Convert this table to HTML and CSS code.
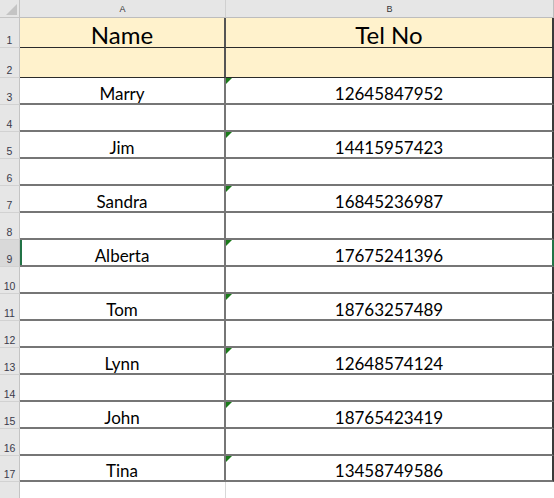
FILE: index.html
```html
<!DOCTYPE html>
<html>
<head>
<meta charset="utf-8">
<link rel="stylesheet" href="styles.css">
</head>
<body>
<div class="sheet">
  <div class="corner"><span class="corner-tri"></span></div>
  <div class="colhead">A</div>
  <div class="colhead colhead-b">B</div>

  <div class="rowhead">1</div>
  <div class="cell title a">Name</div>
  <div class="cell title b">Tel No</div>

  <div class="rowhead">2</div>
  <div class="cell title a"></div>
  <div class="cell title b"></div>

  <div class="rowhead">3</div>
  <div class="cell a">Marry</div>
  <div class="cell b tri">12645847952</div>

  <div class="rowhead">4</div>
  <div class="cell a"></div>
  <div class="cell b"></div>

  <div class="rowhead">5</div>
  <div class="cell a">Jim</div>
  <div class="cell b tri">14415957423</div>

  <div class="rowhead">6</div>
  <div class="cell a"></div>
  <div class="cell b"></div>

  <div class="rowhead">7</div>
  <div class="cell a">Sandra</div>
  <div class="cell b tri">16845236987</div>

  <div class="rowhead">8</div>
  <div class="cell a"></div>
  <div class="cell b"></div>

  <div class="rowhead sel-row">9</div>
  <div class="cell a sel-a">Alberta</div>
  <div class="cell b tri sel-b">17675241396</div>

  <div class="rowhead">10</div>
  <div class="cell a"></div>
  <div class="cell b"></div>

  <div class="rowhead">11</div>
  <div class="cell a">Tom</div>
  <div class="cell b tri">18763257489</div>

  <div class="rowhead">12</div>
  <div class="cell a"></div>
  <div class="cell b"></div>

  <div class="rowhead">13</div>
  <div class="cell a">Lynn</div>
  <div class="cell b tri">12648574124</div>

  <div class="rowhead">14</div>
  <div class="cell a"></div>
  <div class="cell b"></div>

  <div class="rowhead">15</div>
  <div class="cell a">John</div>
  <div class="cell b tri">18765423419</div>

  <div class="rowhead">16</div>
  <div class="cell a"></div>
  <div class="cell b"></div>

  <div class="rowhead">17</div>
  <div class="cell a">Tina</div>
  <div class="cell b tri">13458749586</div>

  <div class="rowhead last"></div>
  <div class="blank a"></div>
  <div class="blank b"></div>
</div>
</body>
</html>
```

FILE: styles.css
```css
html, body {
  margin: 0;
  padding: 0;
  background: #ffffff;
}

.sheet {
  display: grid;
  grid-template-columns: 20px 206px 328px;
  grid-template-rows: 18px 30px 30px repeat(14, 27px) 26px 16px;
  width: 554px;
  height: 498px;
  overflow: hidden;
  font-family: Lato, "Open Sans", sans-serif;
  color: #000;
}

.corner {
  position: relative;
  background: #e6e6e6;
  border-right: 1px solid #c4c4c4;
  border-bottom: 1px solid #c4c4c4;
  box-sizing: border-box;
}

.corner-tri {
  position: absolute;
  right: 2px;
  bottom: 2px;
  width: 0;
  height: 0;
  border-left: 11px solid transparent;
  border-bottom: 11px solid #c4c4c4;
}

.colhead {
  background: #e6e6e6;
  border-bottom: 1px solid #bdbdbd;
  border-right: 1px solid #d0d0d0;
  box-sizing: border-box;
  display: flex;
  align-items: center;
  justify-content: center;
  font-family: "Liberation Sans", Arial, sans-serif;
  font-size: 9px;
  color: #333;
}

.colhead-b {
  border-right: 1px solid #bdbdbd;
}

.rowhead {
  background: #e6e6e6;
  border-right: 1px solid #c4c4c4;
  border-bottom: 1px solid #d2d2d2;
  box-sizing: border-box;
  display: flex;
  align-items: flex-end;
  justify-content: center;
  font-family: "Liberation Sans", Arial, sans-serif;
  font-size: 10.5px;
  line-height: 12px;
  color: #3a3a4a;
  padding-bottom: 1px;
}

.rowhead.sel-row {
  background: #d9d9d9;
}

.rowhead.last {
  border-bottom: none;
}

.cell {
  position: relative;
  box-sizing: border-box;
  display: flex;
  align-items: flex-end;
  justify-content: center;
  font-size: 17px;
  line-height: 18px;
  padding-bottom: 0;
  border-bottom: 2px solid #767676;
}

.cell.a {
  border-right: 2px solid #767676;
}

.cell.b {
  border-right: 2px solid #3a3a3a;
}

.cell.title {
  background: #fff2cc;
  font-size: 24px;
  line-height: 24px;
  border-bottom: 1px solid #2a2a2a;
}

.cell.title.a {
  border-right: 2px solid #555;
}

.cell.tri::before {
  content: "";
  position: absolute;
  top: 0;
  left: 0;
  width: 0;
  height: 0;
  border-top: 6px solid #1a7a1a;
  border-right: 6px solid transparent;
}

.cell.sel-a {
  box-shadow: inset 2px 0 0 #217346;
}

.cell.sel-b {
  border-right: 2px solid #217346;
}

.blank {
  box-sizing: border-box;
}

.blank.a {
  border-right: 1px solid #d8d8d8;
}
```
